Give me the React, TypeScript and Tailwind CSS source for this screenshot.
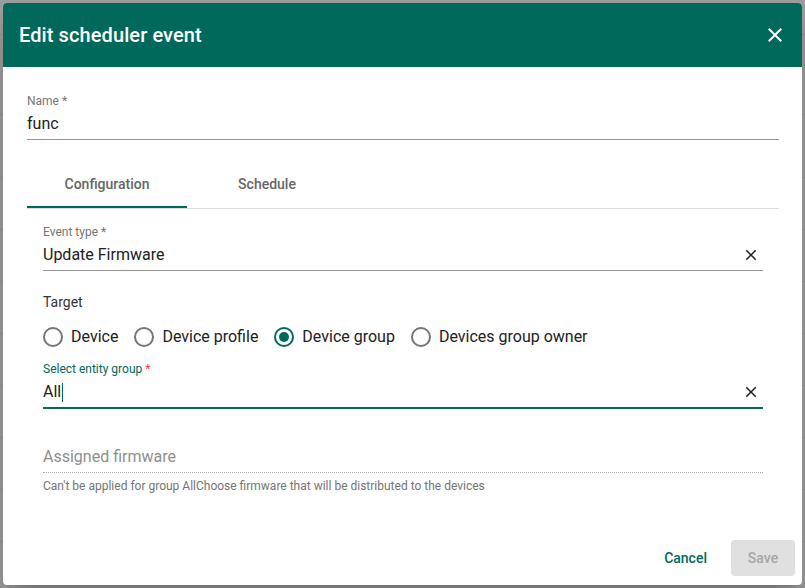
import React from 'react';

const CloseIcon = ({ size, className }: { size: number; className?: string }) => (
    <svg width={size} height={size} viewBox="0 0 24 24" fill="currentColor" className={className}>
        <path d="M19 6.41L17.59 5 12 10.59 6.41 5 5 6.41 10.59 12 5 17.59 6.41 19 12 13.41 17.59 19 19 17.59 13.41 12z" />
    </svg>
);

const Radio = ({ label, checked }: { label: string; checked?: boolean }) => (
    <label className="flex items-center mr-4 h-10">
        <span
            className={
                checked
                    ? 'w-5 h-5 rounded-full border-2 border-[#00695c] flex items-center justify-center'
                    : 'w-5 h-5 rounded-full border-2 border-[#757575] flex items-center justify-center'
            }
        >
            {checked && <span className="w-2.5 h-2.5 rounded-full bg-[#00695c]" />}
        </span>
        <span className="ml-2 text-base text-[#212121]">{label}</span>
    </label>
);

// faint rows of the page behind the overlay
const backdropRows = [35, 80, 63, 52, 52, 52, 52, 52, 52, 52];

const App = () => {
    return (
        <div className="relative w-[805px] h-[588px] overflow-hidden bg-[#9e9e9e] font-['Roboto',sans-serif]">
            {/* Page behind */}
            <div className="flex flex-col">
                {backdropRows.map((h, i) => (
                    <div key={i} className="border-b border-[#939393]" style={{ height: h }} />
                ))}
            </div>

            {/* Dialog */}
            <div className="absolute left-[3px] top-[3px] w-[799px] h-[582px] bg-white rounded-[4px] overflow-hidden flex flex-col shadow-[0_11px_15px_-7px_rgba(0,0,0,0.2),0_24px_38px_3px_rgba(0,0,0,0.14)]">
                {/* Header */}
                <div className="h-16 shrink-0 bg-[#00695c] flex items-center justify-between pl-4">
                    <h2 className="text-[20px] font-medium text-white tracking-[0.1px]">Edit scheduler event</h2>
                    <button className="mr-[15px] text-white">
                        <CloseIcon size={24} />
                    </button>
                </div>

                {/* Body */}
                <div className="pl-6 pr-[23px] pt-[25px]">
                    {/* Name */}
                    <div className="pt-px">
                        <div className="h-4 leading-4 text-xs text-[#757575]">Name *</div>
                        <div className="mt-[3px] h-[28px] pb-[3px] border-b border-[#949494] text-base leading-6 text-[#212121]">
                            func
                        </div>
                    </div>

                    {/* Tabs */}
                    <div className="mt-5 flex border-b border-[#dedede]">
                        <div className="w-40 h-12 flex items-center justify-center text-sm font-medium text-[#666] shadow-[inset_0_-2px_0_#00695c]">
                            Configuration
                        </div>
                        <div className="w-40 h-12 flex items-center justify-center text-sm font-medium text-[#666]">
                            Schedule
                        </div>
                    </div>

                    <div className="px-4 pt-[14px]">
                        {/* Event type */}
                        <div className="pt-px">
                            <div className="h-4 leading-4 text-xs text-[#757575]">Event type *</div>
                            <div className="mt-[3px] h-[28px] pb-[3px] border-b border-[#949494] flex items-center justify-between">
                                <span className="text-base leading-6 text-[#212121]">Update Firmware</span>
                                <CloseIcon size={18} className="mr-[3px] text-[#212121]" />
                            </div>
                        </div>

                        {/* Target */}
                        <div className="mt-[21px] h-5 leading-5 text-sm text-[#333]">Target</div>
                        <div className="mt-[5px] flex items-center">
                            <Radio label="Device" />
                            <Radio label="Device profile" />
                            <Radio label="Device group" checked />
                            <Radio label="Devices group owner" />
                        </div>

                        {/* Entity group */}
                        <div className="mt-[4px]">
                            <div className="h-4 leading-4 text-xs text-[#00695c]">
                                Select entity group <span className="text-[#f44336]">*</span>
                            </div>
                            <div className="mt-[3px] h-[29px] pb-[3px] border-b-2 border-[#00695c] flex items-center justify-between">
                                <span className="flex items-center text-base leading-6 text-[#212121]">
                                    All
                                    <span className="ml-px w-px h-[19px] bg-[#00695c]" />
                                </span>
                                <CloseIcon size={18} className="mr-[3px] text-[#212121]" />
                            </div>
                        </div>

                        {/* Firmware */}
                        <div className="mt-[35px] pt-px">
                            <div className="h-[28px] pb-[3px] border-b border-dotted border-[#a8a8a8] text-base leading-6 text-[#8e8e8e]">
                                Assigned firmware
                            </div>
                            <div className="mt-[5px] h-4 leading-4 text-xs text-[#757575]">
                                Can't be applied for group AllChoose firmware that will be distributed to the devices
                            </div>
                        </div>
                    </div>
                </div>

                {/* Actions */}
                <div className="mt-auto flex justify-end items-center gap-2 pr-[7px] pb-[9px]">
                    <button className="h-9 px-4 text-sm font-medium text-[#00695c] rounded-[4px]">Cancel</button>
                    <button disabled className="h-9 w-16 text-sm font-medium text-[#a6a6a6] bg-[#e0e0e0] rounded-[4px]">
                        Save
                    </button>
                </div>
            </div>
        </div>
    );
};

export default App;
